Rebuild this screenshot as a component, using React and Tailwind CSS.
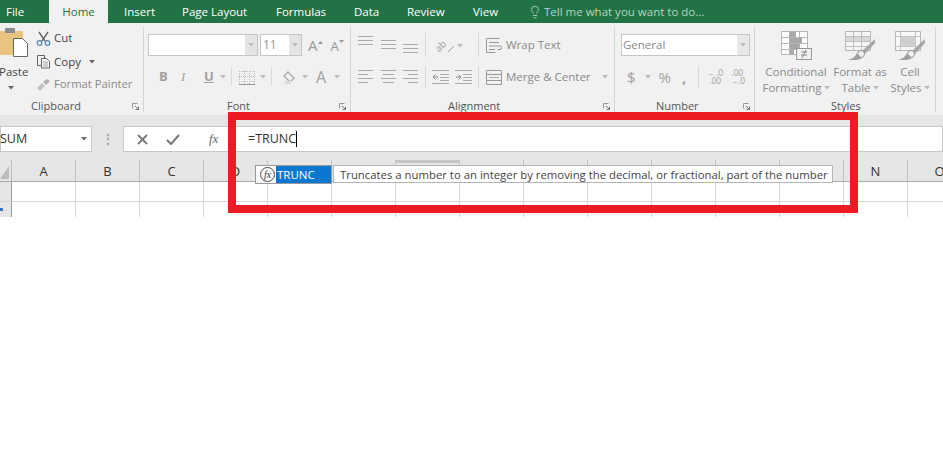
import React from 'react';
import { Lightbulb } from 'lucide-react';

const columns = ['A', 'B', 'C', 'D', 'E', 'F', 'G', 'H', 'I', 'J', 'K', 'L', 'M', 'N', 'O'];
// the popup and its tooltip sit over E..M, no letters show there
const shownLetters = ['A', 'B', 'C', 'D', 'N', 'O'];

function Caret({ className = '' }) {
  return (
    <svg width="6" height="4" viewBox="0 0 6 4" className={className}>
      <path d="M0 0h6L3 3.5z" fill="currentColor" />
    </svg>
  );
}

function Launcher({ className = '' }) {
  return (
    <svg width="7" height="7" viewBox="0 0 7 7" className={className}>
      <path d="M.5.5h5M.5.5v5" stroke="#9a9a9a" fill="none" />
      <path d="M3 3l3.5 3.5M6.500 3.500v3h-3" stroke="#777" fill="none" />
    </svg>
  );
}

function Lines({ rows, width = 15, className = '' }) {
  // rows: [x1, x2] per line
  return (
    <svg width={width} height={rows.length * 4} viewBox={`0 0 ${width} ${rows.length * 4}`} className={className}>
      {rows.map(([a, b], i) => (
        <path key={i} d={`M${a} ${i * 4 + 1.5}H${b}`} stroke="#a9a9a9" />
      ))}
    </svg>
  );
}

function Group({ width, label, labelClass, launcher, children }) {
  return (
    <div className={`${width} mt-[4px] mb-[3px] flex shrink-0 flex-col border-r border-[#d4d4d4]`}>
      <div className="h-[73px]">{children}</div>
      <div className="flex h-[12px] items-center">
        <span className={`${labelClass} text-[11px] leading-[12px] text-[#555]`}>{label}</span>
        {launcher && <Launcher className="mr-[4px] ml-auto" />}
      </div>
    </div>
  );
}

function Sep({ className = '' }) {
  return <div className={`w-px shrink-0 bg-[#d8d8d8] ${className}`} />;
}

function ClipboardGroup() {
  return (
    <Group width="w-[144px]" label="Clipboard" labelClass="ml-[31px]" launcher>
      <div className="flex">
        <div className="flex w-[36px] shrink-0 flex-col items-start">
          <svg width="28" height="30" viewBox="0 0 28 30">
            <rect x="-4" y="4" width="27" height="24" fill="#e9c47e" />
            <rect x="5" y="1" width="10" height="5" fill="#8c8c8c" />
            <path d="M13.500 11.500h9l5 5v13h-14z" fill="#fff" stroke="#666" />
          </svg>
          <span className="mt-[7px] ml-[-1px] text-[11.500px] leading-[16px] text-[#444]">Paste</span>
          <Caret className="mt-[6px] ml-[8px] text-[#666]" />
        </div>
        <div className="flex flex-col">
          <div className="flex h-[22px] items-center">
            <svg width="15" height="15" viewBox="0 0 15 15" className="mr-[3px]">
              <path d="M3 1l6 9M12 1l-6 9" stroke="#666" strokeWidth="1.400" fill="none" />
              <circle cx="3.500" cy="12" r="2.300" fill="none" stroke="#4f86b8" strokeWidth="1.200" />
              <circle cx="11.500" cy="12" r="2.300" fill="none" stroke="#4f86b8" strokeWidth="1.200" />
            </svg>
            <span className="text-[11.500px] text-[#444]">Cut</span>
          </div>
          <div className="mt-[1px] flex h-[23px] items-center">
            <svg width="15" height="15" viewBox="0 0 15 15" className="mr-[3px]">
              <path d="M1.500 1.500h7v3M1.500 1.500v10h4" stroke="#666" fill="none" />
              <path d="M5.500 4.500h5l3 3v6.500h-8z" fill="#fff" stroke="#666" />
              <path d="M7 8h5M7 10h5M7 12h5" stroke="#999" />
            </svg>
            <span className="text-[11.500px] text-[#444]">Copy</span>
            <Caret className="ml-[8px] text-[#666]" />
          </div>
          <div className="flex h-[23px] items-center">
            <svg width="15" height="15" viewBox="0 0 15 15" className="mr-[3px]">
              <path d="M1 11l5-5 3 3-5 5z" fill="#c4c4c4" />
              <path d="M7 5l4-3 3 2-4 4z" fill="#b0b0b0" />
            </svg>
            <span className="text-[11.250px] text-[#8a8a8a]">Format Painter</span>
          </div>
        </div>
      </div>
    </Group>
  );
}

function FontGroup() {
  return (
    <Group width="w-[207px]" label="Font" labelClass="ml-[83px]" launcher>
      <div className="mt-[7px] flex h-[22px] items-stretch pl-[4px]">
        <div className="flex w-[110px] justify-end border border-[#c6c6c6] bg-white">
          <div className="flex w-[12px] items-center justify-center bg-[#e4e4e4]"><Caret className="text-[#bbb]" /></div>
        </div>
        <div className="ml-[2px] flex w-[42px] border border-[#c6c6c6] bg-white">
          <span className="pl-[2px] text-[12px] leading-[20px] text-[#999]">11</span>
          <div className="ml-auto flex w-[12px] items-center justify-center bg-[#e4e4e4]"><Caret className="text-[#bbb]" /></div>
        </div>
        <span className="ml-[6px] text-[15px] leading-[23px] text-[#999]">A</span>
        <svg width="5" height="3" viewBox="0 0 5 3" className="mt-[7px] text-[#999]"><path d="M0 3l2.500-3L5 3z" fill="currentColor" /></svg>
        <span className="ml-[8px] text-[13px] leading-[25px] text-[#999]">A</span>
        <svg width="5" height="3" viewBox="0 0 5 3" className="mt-[6px] text-[#999]"><path d="M0 0h5L2.500 3z" fill="currentColor" /></svg>
      </div>
      <div className="mt-[12px] flex h-[18px] items-center pl-[15px] text-[#a0a0a0]">
        <span className="w-[22px] text-[13px] font-bold">B</span>
        <span className="w-[23px] text-[13px] italic" style={{ fontFamily: '"Liberation Serif", serif' }}>I</span>
        <span className="w-[16px] text-[13px] font-bold underline">U</span>
        <Caret className="text-[#bbb]" />
        <Sep className="ml-[5px] h-[18px]" />
        <svg width="16" height="15" viewBox="0 0 16 15" className="ml-[7px]">
          <path d="M.5 1v13M5.500 1v13M10.500 1v13M15.500 1v13M0 1.500h16M0 6.500h16M0 11.500h16" stroke="#bdbdbd" strokeDasharray="1 1" />
          <path d="M0 14.500h16" stroke="#999" />
        </svg>
        <Caret className="ml-[5px] text-[#bbb]" />
        <Sep className="ml-[5px] h-[18px]" />
        <svg width="15" height="15" viewBox="0 0 15 15" className="ml-[10px]">
          <path d="M6 2l6 6-4 4-6-6z" fill="none" stroke="#aaa" strokeWidth="1.300" />
          <path d="M2 11h7v3H2z" fill="#ddd" />
        </svg>
        <Caret className="ml-[5px] text-[#bbb]" />
        <span className="ml-[8px] text-[16px]">A</span>
        <Caret className="ml-[8px] text-[#bbb]" />
      </div>
    </Group>
  );
}

function AlignmentGroup() {
  return (
    <Group width="w-[264px]" label="Alignment" labelClass="ml-[97px]" launcher>
      <div className="mt-[6px] flex h-[24px] items-center pl-[7px]">
        <Lines rows={[[0, 15], [0, 15], [0, 15]]} className="mb-[8px]" />
        <Lines rows={[[0, 15], [0, 15], [0, 15]]} className="ml-[8px]" />
        <Lines rows={[[0, 15], [0, 15], [0, 15]]} className="mt-[8px] ml-[7px]" />
        <Sep className="ml-[7px] h-[24px]" />
        <span className="ml-[8px] w-[14px] -rotate-45 text-[10px] leading-none text-[#a0a0a0]">ab</span>
        <svg width="6" height="6" viewBox="0 0 6 6" className="mt-[8px]">
          <path d="M0 6l6-6" stroke="#999" />
        </svg>
        <Caret className="mt-[2px] ml-[3px] text-[#bbb]" />
        <Sep className="ml-[15px] h-[24px]" />
        <svg width="16" height="15" viewBox="0 0 16 15" className="ml-[7px]">
          <path d="M.5.5h13M.5.5v14h9M3 4.500h10M3 8h7M3 11.500h6" stroke="#999" fill="none" />
          <path d="M10 8h4a1.500 1.500 0 0 1 0 3.500h-2" stroke="#999" fill="none" />
        </svg>
        <span className="ml-[4px] text-[11.500px] text-[#8a8a8a]">Wrap Text</span>
      </div>
      <div className="mt-[11px] flex h-[18px] items-center pl-[7px]">
        <Lines rows={[[0, 15], [0, 10], [0, 15], [0, 10]]} />
        <Lines rows={[[0, 15], [2, 13], [0, 15], [2, 13]]} className="ml-[8px]" />
        <Lines rows={[[0, 15], [5, 15], [0, 15], [5, 15]]} className="ml-[7px]" />
        <Sep className="ml-[7px] h-[22px]" />
        <svg width="17" height="14" viewBox="0 0 17 14" className="ml-[6px]">
          <path d="M0 .5h17M8 4.500h9M8 7.500h9M8 10.500h9M0 13.500h17" stroke="#aaa" />
          <path d="M6 7H1M3.500 4.500L1 7l2.500 2.500" stroke="#8a8a8a" fill="none" />
        </svg>
        <svg width="17" height="14" viewBox="0 0 17 14" className="ml-[6px]">
          <path d="M0 .5h17M8 4.500h9M8 7.500h9M8 10.500h9M0 13.500h17" stroke="#aaa" />
          <path d="M1 7h5M3.500 4.500L6 7 3.500 9.500" stroke="#8a8a8a" fill="none" />
        </svg>
        <Sep className="ml-[6px] h-[22px]" />
        <svg width="16" height="15" viewBox="0 0 16 15" className="ml-[7px]">
          <path d="M.5.5h15v14H.5zM.5 4.500h15M.5 10.500h15" stroke="#999" fill="none" />
          <path d="M3 7.500h10" stroke="#aaa" />
        </svg>
        <span className="ml-[4px] text-[11.500px] text-[#8a8a8a]">Merge &amp; Center</span>
        <Caret className="ml-[11px] text-[#bbb]" />
      </div>
    </Group>
  );
}

function NumberGroup() {
  return (
    <Group width="w-[140px]" label="Number" labelClass="ml-[41px]" launcher>
      <div className="mt-[7px] ml-[6px] flex h-[22px] w-[129px] border border-[#c6c6c6] bg-white">
        <span className="pl-[1px] text-[11.500px] leading-[20px] text-[#8a8a8a]">General</span>
        <div className="ml-auto flex w-[12px] items-center justify-center bg-[#e8e8e8]"><Caret className="text-[#bbb]" /></div>
      </div>
      <div className="mt-[12px] flex h-[18px] items-center pl-[12px] text-[#a0a0a0]">
        <span className="text-[15px]">$</span>
        <Caret className="ml-[9px] text-[#bbb]" />
        <span className="ml-[8px] text-[15px]">%</span>
        <span className="ml-[11px] text-[15px] font-bold">,</span>
        <Sep className="ml-[12px] h-[22px]" />
        <span className="ml-[6px] w-[20px] text-center text-[8.500px] leading-[8px] whitespace-nowrap">←.0<br />.00</span>
        <span className="ml-[2px] w-[20px] text-center text-[8.500px] leading-[8px] whitespace-nowrap">.00<br />→.0</span>
      </div>
    </Group>
  );
}

function StyleButton({ width, line1, line2, icon }) {
  return (
    <div className={`${width} flex shrink-0 flex-col items-center`}>
      <div className="flex h-[37px] items-center">{icon}</div>
      <span className="text-[11.500px] leading-[16px] whitespace-nowrap text-[#8a8a8a]">{line1}</span>
      <span className="flex items-center text-[11.500px] leading-[16px] whitespace-nowrap text-[#8a8a8a]">
        {line2}
        <Caret className="ml-[2px] text-[#bbb]" />
      </span>
    </div>
  );
}

function Brush() {
  return (
    <>
      <path d="M30 8L17 20l3 3L30 12z" fill="#a6a6a6" />
      <circle cx="16" cy="23" r="3.500" fill="#f1f1f1" stroke="#999" />
      <path d="M3 29c4-1 7-3 9-7l5 5c-3 2-8 3-14 2z" fill="#a0a0a0" />
    </>
  );
}

function TableIcon() {
  return (
    <svg width="31" height="29" viewBox="0 0 31 29">
      <path d="M.5.5h25v19H.5z" fill="#f6f6f6" stroke="#b5b5b5" />
      <path d="M1 5h24v5H1z" fill="#d8d8d8" />
      <path d="M.5 5.500h25M.5 10.500h25M.5 15.500h25M8.500 1v18M16.500 1v18" stroke="#bdbdbd" fill="none" />
      <Brush />
    </svg>
  );
}

function CellStyleIcon() {
  return (
    <svg width="31" height="29" viewBox="0 0 31 29">
      <path d="M.5.5h25v19H.5z" fill="#f6f6f6" stroke="#b5b5b5" />
      <path d="M6 6h14v9H6z" fill="#cfcfcf" />
      <path d="M.5 5.500h25M.5 15.500h25M5.500 1v18M20.500 1v18" stroke="#c6c6c6" fill="none" />
      <Brush />
    </svg>
  );
}

function StylesGroup() {
  return (
    <Group width="w-[181px]" label="Styles" labelClass="ml-[76px]">
      <div className="flex pl-[7px]">
        <StyleButton
          width="w-[68px]"
          line1="Conditional"
          line2="Formatting"
          icon={
            <svg width="31" height="29" viewBox="0 0 31 29">
              <path d="M.5.5h26v23H.5zM.5 6.500h26M.5 12.500h26M.5 18.500h26M8.500 1v22M18.500 1v22" stroke="#b5b5b5" fill="#fff" />
              <path d="M9 1h6v5H9zM9 7h12v5H9zM9 13h9v5H9zM9 19h4v4H9z" fill="#a8a8a8" />
              <rect x="15.500" y="17.500" width="15" height="11" fill="#f1f1f1" stroke="#999" />
              <path d="M20 21h6M20 24h6M25 19l-4 8" stroke="#8a8a8a" />
            </svg>
          }
        />
        <StyleButton width="w-[60px]" line1="Format as" line2="Table" icon={<TableIcon />} />
        <StyleButton width="w-[40px]" line1="Cell" line2="Styles" icon={<CellStyleIcon />} />
      </div>
    </Group>
  );
}

function FormulaBar() {
  return (
    <div className="flex h-[37px] bg-[#e6e6e6] pt-[11px]">
      <div className="flex h-[26px] w-[92px] items-center border border-[#c8c8c8] bg-white">
        <span className="ml-[-1px] text-[12.500px] text-[#333]">SUM</span>
        <Caret className="mr-[4px] ml-auto text-[#666]" />
      </div>
      <div className="flex w-[31px] items-center justify-center text-[14px] leading-none font-bold text-[#aaa]">⋮</div>
      <div className="flex flex-1 items-center border border-[#c8c8c8] bg-white">
        <svg width="11" height="11" viewBox="0 0 11 11" className="ml-[13px]">
          <path d="M1 1l9 9M10 1l-9 9" stroke="#777" strokeWidth="1.800" />
        </svg>
        <svg width="14" height="11" viewBox="0 0 14 11" className="ml-[18px]">
          <path d="M1 6l4 4 8-9" stroke="#777" strokeWidth="2" fill="none" />
        </svg>
        <span className="ml-[29px] w-[39px] text-[13px] text-[#666] italic" style={{ fontFamily: '"Liberation Serif", serif' }}>fx</span>
        <span className="flex h-[16px] items-center text-[12.500px] text-[#333]">
          =TRUNC
          <span className="h-[16px] w-px bg-black" />
        </span>
      </div>
    </div>
  );
}

function SheetGrid() {
  return (
    <div className="overflow-hidden">
      <div className="flex h-[30px] border-b border-[#ababab] bg-[#e6e6e6] pt-[8px]">
        <div className="flex w-[12px] shrink-0 items-end border-r border-[#bdbdbd] pb-[2px]">
          <svg width="9" height="13" viewBox="0 0 9 13"><path d="M9 0v13H0z" fill="#bcbcbc" /></svg>
        </div>
        {columns.map((c) => (
          <div
            key={c}
            className={`flex w-[64px] shrink-0 items-center justify-center border-r border-[#c2c2c2] pt-[3px] text-[13px] text-[#333] ${c === 'G' ? 'border-t-[3px] border-t-[#c6c6c6]' : ''}`}
          >
            {shownLetters.includes(c) ? c : ''}
          </div>
        ))}
      </div>
      {['h-[20px]', 'h-[15px]'].map((h, i) => (
        <div key={h} className={`flex ${h} ${i === 0 ? 'border-b border-[#d6d6d6]' : ''}`}>
          <div className="flex w-[12px] shrink-0 items-end border-r border-[#9a9a9a] bg-[#e6e6e6]">
            {i === 1 && <span className="mb-[6px] h-[3px] w-[3px] bg-[#3b78b0]" />}
          </div>
          {columns.map((c) => (
            <div key={c} className="w-[64px] shrink-0 border-r border-[#d6d6d6]" />
          ))}
        </div>
      ))}
    </div>
  );
}

export default function App() {
  return (
    <div
      className="relative h-[460px] w-[943px] overflow-hidden bg-white"
      style={{ fontFamily: '"Open Sans", "Liberation Sans", sans-serif' }}
    >
      <div className="flex h-[23px] items-stretch bg-[#217346] pt-[1px] text-[11.500px] text-white">
        <span className="ml-[6px] w-[43px] leading-[22px]">File</span>
        <span className="mt-[-1px] w-[59px] bg-[#f1f1f1] text-center leading-[24px] text-[#217346]">Home</span>
        <span className="ml-[16px] w-[58px] leading-[22px]">Insert</span>
        <span className="w-[94px] leading-[22px]">Page Layout</span>
        <span className="w-[78px] leading-[22px]">Formulas</span>
        <span className="w-[53px] leading-[22px]">Data</span>
        <span className="w-[66px] leading-[22px]">Review</span>
        <span className="w-[55px] leading-[22px]">View</span>
        <span className="flex items-center text-[#b5d3c2]">
          <Lightbulb size={14} strokeWidth={1.500} />
          <span className="ml-[2px]">Tell me what you want to do...</span>
        </span>
      </div>

      <div className="flex h-[92px] bg-[#f1f1f1]">
        <ClipboardGroup />
        <FontGroup />
        <AlignmentGroup />
        <NumberGroup />
        <StylesGroup />
      </div>

      <FormulaBar />
      <SheetGrid />

      {/* autocomplete popup */}
      <div className="absolute top-[165px] left-[255px] flex h-[19px] w-[77px] border border-[#9a9a9a] bg-white">
        <span className="ml-[4px] flex h-[15px] w-[15px] items-center justify-center self-center rounded-full border border-[#444] text-[10px] text-[#333] italic" style={{ fontFamily: '"Liberation Serif", serif' }}>fx</span>
        <span className="ml-[1px] flex-1 bg-[#0a78d0] pl-[1px] text-[11.500px] leading-[17px] text-white">TRUNC</span>
      </div>
      <div className="absolute top-[165px] left-[333px] flex h-[18px] w-[500px] items-center border border-[#b5b5b5] bg-white pl-[6px] text-[11.350px] whitespace-nowrap text-[#444]">
        Truncates a number to an integer by removing the decimal, or fractional, part of the number
      </div>

      {/* red highlight */}
      <div className="absolute top-[112px] left-[228px] h-[101px] w-[630px] border-[8px] border-[#ed1c24]" />
    </div>
  );
}
